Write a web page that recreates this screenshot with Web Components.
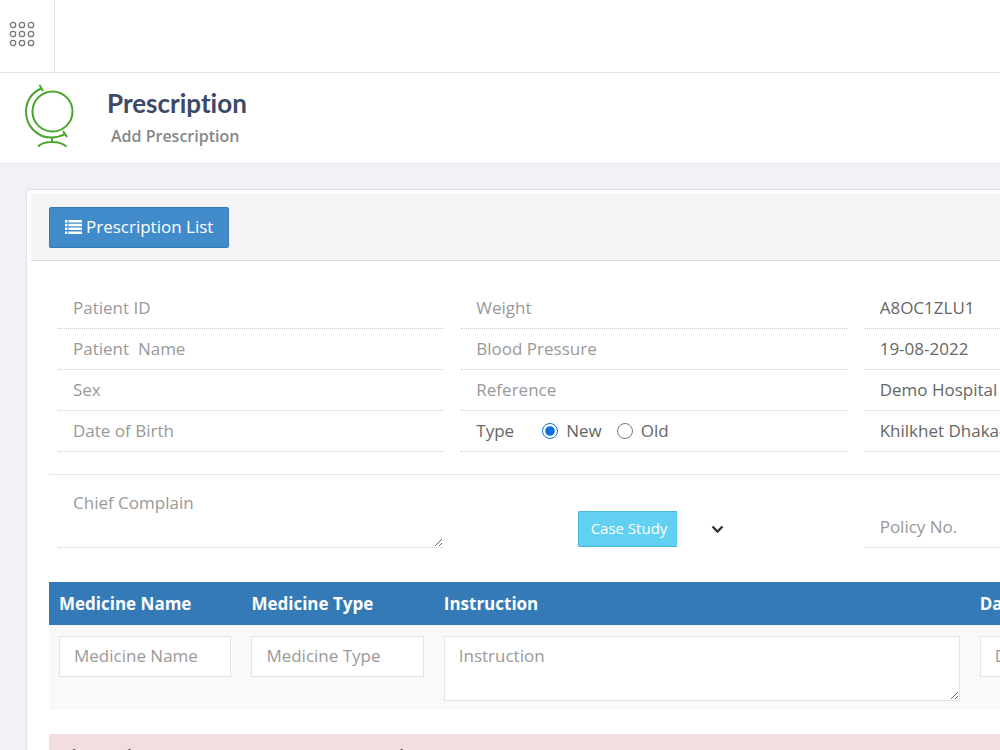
<!DOCTYPE html>
<html lang="en">
<head>
<meta charset="utf-8">
<meta name="viewport" content="width=device-width, initial-scale=1">
<title>Add Prescription</title>
<style>
    body {
        margin: 0;
        min-height: 100vh;
        overflow: hidden;
        background: #f0f2f6;
        color: #666;
        font: 17px/24px "Open Sans", "Noto Sans", sans-serif;
    }
</style>
</head>
<body>
<top-bar></top-bar>
<page-heading>
    <span slot="title">Prescription</span>
    <span slot="subtitle">Add Prescription</span>
</page-heading>
<prescription-form></prescription-form>

<script>
// Top strip with the sidebar toggle
class TopBar extends HTMLElement {
    constructor() {
        super();
        this.attachShadow({ mode: 'open' });
        this.shadowRoot.innerHTML = `
            <style>
                :host {
                    display: flex;
                    height: 72px;
                    background: #fff;
                    border-bottom: 1px solid #e1e4e8;
                }

                button {
                    width: 55px;
                    padding: 0 0 4px 9px;
                    border: 0;
                    border-right: 1px solid #e1e4e8;
                    background: none;
                    text-align: left;
                }

                svg {
                    display: block;
                    fill: none;
                    stroke: #77797d;
                }
            </style>
            <button type="button" aria-label="Toggle navigation">
                <svg width="26" height="26" viewBox="0 0 26 26" stroke-width="1.3">
                    <circle cx="4" cy="4" r="2.7"/><circle cx="13" cy="4" r="2.7"/><circle cx="22" cy="4" r="2.7"/>
                    <circle cx="4" cy="13" r="2.7"/><circle cx="13" cy="13" r="2.7"/><circle cx="22" cy="13" r="2.7"/>
                    <circle cx="4" cy="22" r="2.7"/><circle cx="13" cy="22" r="2.7"/><circle cx="22" cy="22" r="2.7"/>
                </svg>
            </button>
        `;
    }
}

// Globe icon with the page title and subtitle
class PageHeading extends HTMLElement {
    constructor() {
        super();
        this.attachShadow({ mode: 'open' });
        this.shadowRoot.innerHTML = `
            <style>
                :host {
                    display: flex;
                    gap: 31px;
                    box-sizing: border-box;
                    height: 91px;
                    padding: 10px 24px;
                    background: #fff;
                    border-bottom: 1px solid #e1e4e8;
                }

                svg {
                    fill: none;
                    stroke: #4aa52c;
                    stroke-width: 2;
                }

                h1 {
                    margin: 4px 0 0;
                    color: #3d4a67;
                    font: bold 26px/32px Lato, sans-serif;
                    font-variant-ligatures: none;
                }

                p {
                    margin: 5px 0 0 4px;
                    color: #85878a;
                    font-size: 16px;
                    font-weight: 600;
                    line-height: 24px;
                }
            </style>
            <svg width="52" height="66" viewBox="0 0 52 66" aria-hidden="true">
                <circle cx="28.500" cy="28.500" r="20"/>
                <path d="M17.500 5.500C8 9 2 18 2 28.500 2 43 13 54.500 27.500 54.500c5 0 9.500-1.200 13.500-3.300"/>
                <path d="M15.500 2l3.500 6M39 48l4 6M28 54.500v5M14 63.500c3-3 8-4.500 14-4.500s11 1.500 14.500 4.500"/>
            </svg>
            <div>
                <h1><slot name="title"></slot></h1>
                <p><slot name="subtitle"></slot></p>
            </div>
        `;
    }
}

// White panel with a grey header bar
class FormPanel extends HTMLElement {
    constructor() {
        super();
        this.attachShadow({ mode: 'open' });
        this.shadowRoot.innerHTML = `
            <style>
                :host {
                    display: block;
                    padding: 4px;
                    background: #fff;
                    border: 1px solid #dfe2e6;
                    border-radius: 4px;
                    box-shadow: 0 0 2px #dfe2e6;
                }

                header {
                    padding: 13px 18px 12px;
                    background: #f5f5f5;
                    border-bottom: 1px solid #ddd;
                }

                section {
                    padding: 27px 18px 18px;
                }
            </style>
            <header><slot name="header"></slot></header>
            <section><slot></slot></section>
        `;
    }
}

// Blue link button with a list icon
class ListButton extends HTMLElement {
    constructor() {
        super();
        this.attachShadow({ mode: 'open' });
        this.shadowRoot.innerHTML = `
            <style>
                :host {
                    display: flex;
                }

                a {
                    display: flex;
                    align-items: center;
                    gap: 4px;
                    padding: 6px 15px 8px;
                    border: 1px solid #3579b5;
                    border-radius: 2px;
                    background: #428bca;
                    color: #fff;
                    text-decoration: none;
                    line-height: 25px;
                }

                svg {
                    fill: #fff;
                }
            </style>
            <a href="#list">
                <svg width="17" height="14" viewBox="0 0 17 14" aria-hidden="true">
                    <path d="M0 0h2.500v2.500H0zM3.500 0H17v2.500H3.500zM0 3.800h2.500v2.500H0zM3.500 3.800H17v2.500H3.500zM0 7.600h2.500v2.500H0zM3.500 7.600H17v2.500H3.500zM0 11.400h2.500v2.500H0zM3.500 11.400H17v2.500H3.500z"/>
                </svg>
                <slot></slot>
            </a>
        `;
    }
}

// Text field. Attributes: label, value, multiline, boxed
class TextField extends HTMLElement {
    constructor() {
        super();
        this.attachShadow({ mode: 'open' });
    }

    connectedCallback() {
        const label = this.getAttribute('label');
        const value = this.getAttribute('value') || '';
        const control = this.hasAttribute('multiline')
            ? `<textarea aria-label="${label}" placeholder="${label}"></textarea>`
            : `<input type="text" aria-label="${label}" placeholder="${label}" value="${value}">`;

        this.shadowRoot.innerHTML = `
            <style>
                :host {
                    display: block;
                }

                input, textarea {
                    display: block;
                    box-sizing: border-box;
                    width: 100%;
                    height: 41px;
                    margin: 0;
                    padding: 6px 15px 8px;
                    border: 0;
                    border-bottom: 1px dotted #ccc;
                    border-radius: 0;
                    background: #fff;
                    color: #666;
                    font: inherit;
                    white-space: pre-wrap;
                }

                textarea {
                    height: 64px;
                    padding-top: 7px;
                }

                :host([boxed]) input, :host([boxed]) textarea {
                    padding-left: 14px;
                    padding-right: 14px;
                    border: 1px solid #e1e4e8;
                }

                :host([boxed]) textarea {
                    height: 65px;
                }

                ::placeholder {
                    color: #999;
                    opacity: 1;
                    white-space: pre;
                }
            </style>
            ${control}
        `;
    }
}

// New / Old patient choice
class TypeChoice extends HTMLElement {
    constructor() {
        super();
        this.attachShadow({ mode: 'open' });
        this.shadowRoot.innerHTML = `
            <style>
                :host {
                    display: block;
                }

                div {
                    display: flex;
                    box-sizing: border-box;
                    height: 41px;
                    padding: 0 15px;
                    align-items: center;
                    border-bottom: 1px dotted #ccc;
                }

                label {
                    display: flex;
                    align-items: center;
                    gap: 8px;
                    margin-right: 15px;
                }

                span {
                    margin-right: 28px;
                }

                input {
                    width: 16px;
                    height: 16px;
                    margin: 0;
                    accent-color: #0d6fdc;
                }
            </style>
            <div role="radiogroup" aria-labelledby="type">
                <span id="type">Type</span>
                <label><input type="radio" name="type" checked>New</label>
                <label><input type="radio" name="type">Old</label>
            </div>
        `;
    }
}

// Case study button joined to its drop-down
class CaseStudy extends HTMLElement {
    constructor() {
        super();
        this.attachShadow({ mode: 'open' });
        this.shadowRoot.innerHTML = `
            <style>
                :host {
                    display: flex;
                    justify-content: center;
                    padding-bottom: 1px;
                }

                button {
                    height: 36px;
                    padding: 0 10px 2px 12px;
                    border: 1px solid #46b8da;
                    border-right: 0;
                    border-radius: 2px 0 0 2px;
                    background: #62d0f1;
                    color: #fff;
                    font: inherit;
                    font-size: 15px;
                }

                div {
                    display: grid;
                    align-items: center;
                }

                select, svg {
                    grid-area: 1 / 1;
                }

                select {
                    width: 53px;
                    height: 36px;
                    border: 0;
                    background: #fff;
                    appearance: none;
                }

                svg {
                    justify-self: end;
                    margin-right: 6px;
                    fill: none;
                    stroke: #333;
                    stroke-width: 2.4;
                    pointer-events: none;
                }
            </style>
            <button type="button">Case Study</button>
            <div>
                <select aria-label="Case Study"><option></option></select>
                <svg width="13" height="9" viewBox="0 0 13 9"><path d="M1.500 1.500l5 5 5-5"/></svg>
            </div>
        `;
    }
}

// Table of the prescribed medicines
class MedicineTable extends HTMLElement {
    constructor() {
        super();
        this.attachShadow({ mode: 'open' });
        this.shadowRoot.innerHTML = `
            <style>
                :host {
                    display: block;
                }

                table {
                    width: 100%;
                    table-layout: fixed;
                    border-collapse: collapse;
                }

                .name { width: 15.9%; }
                .text { width: 44.3%; }

                th {
                    padding: 10px 10px 9px;
                    background: #337ab7;
                    color: #fff;
                    text-align: left;
                }

                td {
                    padding: 11px 10px 9px;
                    background: #f9f9f9;
                    vertical-align: top;
                }
            </style>
            <table>
                <colgroup><col class="name"><col class="name"><col class="text"><col></colgroup>
                <thead>
                    <tr><th>Medicine Name</th><th>Medicine Type</th><th>Instruction</th><th>Days</th></tr>
                </thead>
                <tbody>
                    <tr>
                        <td><text-field boxed label="Medicine Name"></text-field></td>
                        <td><text-field boxed label="Medicine Type"></text-field></td>
                        <td><text-field boxed multiline label="Instruction"></text-field></td>
                        <td><text-field boxed label="Days"></text-field></td>
                    </tr>
                </tbody>
            </table>
        `;
    }
}

// Table of the diagnoses
class DiagnosisTable extends HTMLElement {
    constructor() {
        super();
        this.attachShadow({ mode: 'open' });
        this.shadowRoot.innerHTML = `
            <style>
                :host {
                    display: block;
                }

                table {
                    width: 100%;
                    table-layout: fixed;
                    border-collapse: collapse;
                }

                .name { width: 22.5%; }

                th {
                    padding: 11px 10px 10px;
                    background: #f2dede;
                    color: #444;
                    text-align: left;
                }
            </style>
            <table>
                <colgroup><col class="name"><col></colgroup>
                <thead>
                    <tr><th>Diagnosis</th><th>Instruction</th></tr>
                </thead>
            </table>
        `;
    }
}

// The whole form, wider than the window
class PrescriptionForm extends HTMLElement {
    constructor() {
        super();
        this.attachShadow({ mode: 'open' });
        this.shadowRoot.innerHTML = `
            <style>
                :host {
                    display: block;
                    box-sizing: border-box;
                    width: 131%;
                    padding: 25px 28px 25px 26px;
                }

                .row {
                    display: grid;
                    grid-template-columns: repeat(3, 1fr);
                    gap: 18px;
                    padding: 0 9px;
                }

                .bottom {
                    align-items: end;
                }

                hr {
                    margin: 22px 0 9px;
                    border: 0;
                    border-top: 1px solid #e6e8e8;
                }

                medicine-table {
                    margin: 34px 0 24px;
                }
            </style>
            <form-panel>
                <list-button slot="header">Prescription List</list-button>
                <div class="row">
                    <div>
                        <text-field label="Patient ID"></text-field>
                        <text-field label="Patient&nbsp; Name"></text-field>
                        <text-field label="Sex"></text-field>
                        <text-field label="Date of Birth"></text-field>
                    </div>
                    <div>
                        <text-field label="Weight"></text-field>
                        <text-field label="Blood Pressure"></text-field>
                        <text-field label="Reference"></text-field>
                        <type-choice></type-choice>
                    </div>
                    <div>
                        <text-field label="Appointment ID" value="A8OC1ZLU1"></text-field>
                        <text-field label="Date" value="19-08-2022"></text-field>
                        <text-field label="Hospital" value="Demo Hospital"></text-field>
                        <text-field label="Address" value="Khilkhet Dhaka-"></text-field>
                    </div>
                </div>
                <hr>
                <div class="row bottom">
                    <text-field multiline label="Chief Complain"></text-field>
                    <case-study></case-study>
                    <text-field label="Policy No."></text-field>
                </div>
                <medicine-table></medicine-table>
                <diagnosis-table></diagnosis-table>
            </form-panel>
        `;
    }
}

customElements.define('top-bar', TopBar);
customElements.define('page-heading', PageHeading);
customElements.define('form-panel', FormPanel);
customElements.define('list-button', ListButton);
customElements.define('text-field', TextField);
customElements.define('type-choice', TypeChoice);
customElements.define('case-study', CaseStudy);
customElements.define('medicine-table', MedicineTable);
customElements.define('diagnosis-table', DiagnosisTable);
customElements.define('prescription-form', PrescriptionForm);
</script>
</body>
</html>
